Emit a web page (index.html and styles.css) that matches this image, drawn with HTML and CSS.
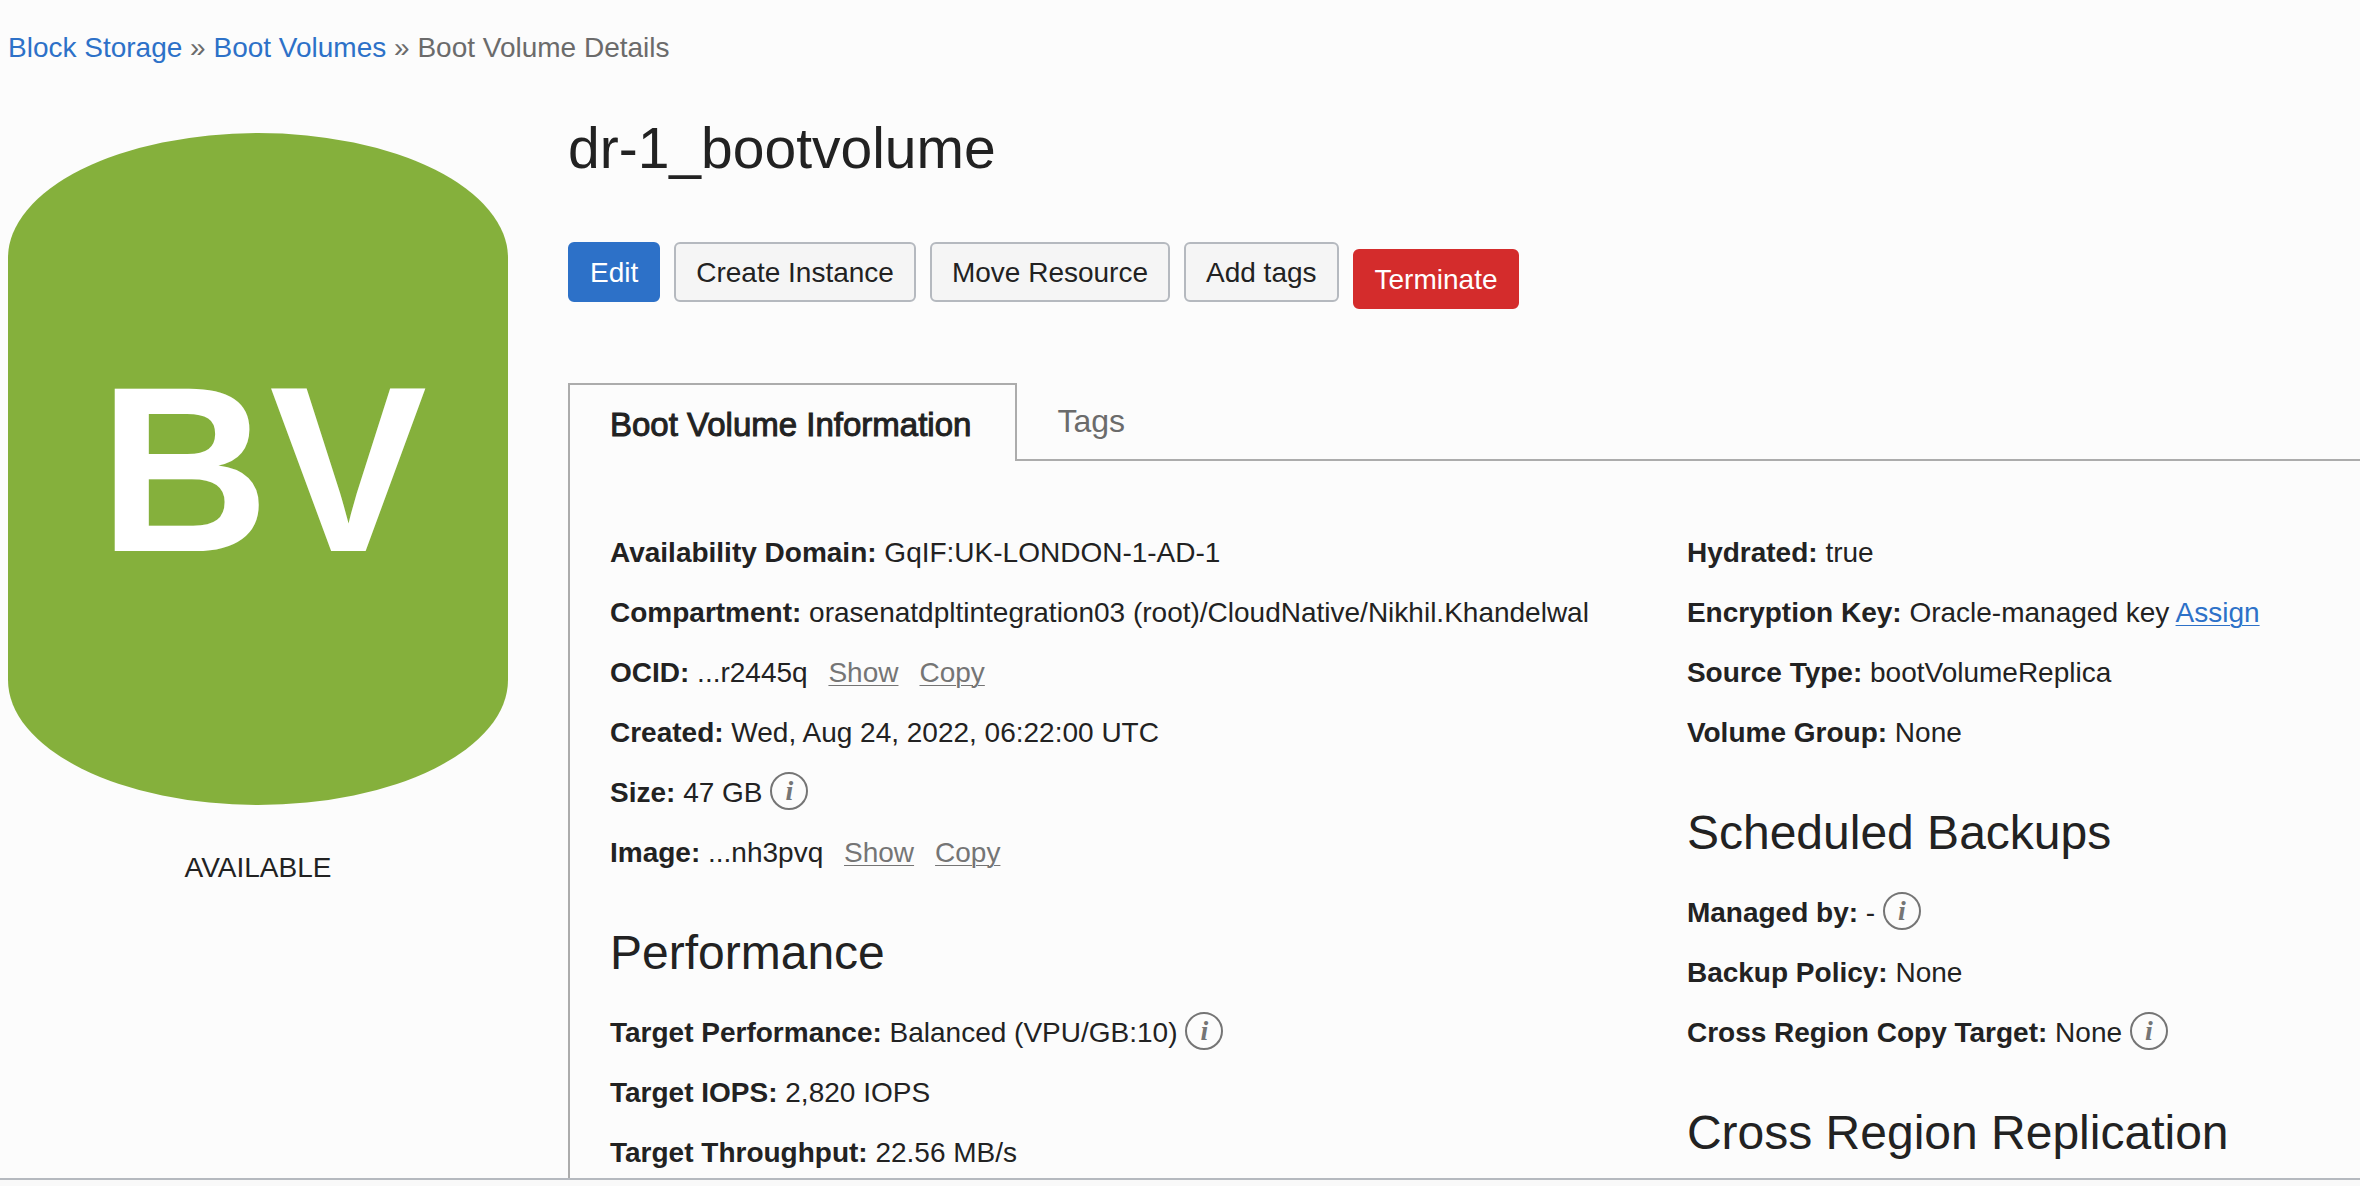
FILE: index.html
```html
<!DOCTYPE html>
<html lang="en">
<head>
  <meta charset="UTF-8">
  <meta name="viewport" content="width=device-width, initial-scale=1.0">
  <title>Boot Volume Details</title>
  <link rel="stylesheet" href="styles.css">
</head>
<body>

<nav class="breadcrumb" aria-label="Breadcrumb">
  <a href="#">Block Storage</a> <span class="separator">»</span>
  <a href="#">Boot Volumes</a> <span class="separator">»</span>
  <span>Boot Volume Details</span>
</nav>

<main class="page">
  <aside class="resource">
    <div class="resource-icon">BV</div>
    <p class="resource-status">AVAILABLE</p>
  </aside>

  <section class="details">
    <h1>dr-1_bootvolume</h1>

    <div class="actions">
      <button type="button" class="btn btn-primary">Edit</button>
      <button type="button" class="btn">Create Instance</button>
      <button type="button" class="btn">Move Resource</button>
      <button type="button" class="btn">Add tags</button>
      <button type="button" class="btn btn-danger">Terminate</button>
    </div>

    <div class="tabs" role="tablist">
      <button type="button" class="tab active" role="tab" aria-selected="true">Boot Volume Information</button>
      <button type="button" class="tab" role="tab" aria-selected="false">Tags</button>
    </div>

    <div class="panel" role="tabpanel">
      <div class="column">
        <p><strong>Availability Domain:</strong> GqIF:UK-LONDON-1-AD-1</p>
        <p><strong>Compartment:</strong> orasenatdpltintegration03 (root)/CloudNative/Nikhil.Khandelwal</p>
        <p><strong>OCID:</strong> ...r2445q <a href="#" class="inline-action">Show</a><a href="#" class="inline-action">Copy</a></p>
        <p><strong>Created:</strong> Wed, Aug 24, 2022, 06:22:00 UTC</p>
        <p><strong>Size:</strong> 47 GB <button type="button" class="info" aria-label="About size">i</button></p>
        <p><strong>Image:</strong> ...nh3pvq <a href="#" class="inline-action">Show</a><a href="#" class="inline-action">Copy</a></p>

        <h2>Performance</h2>
        <p><strong>Target Performance:</strong> Balanced (VPU/GB:10) <button type="button" class="info" aria-label="About target performance">i</button></p>
        <p><strong>Target IOPS:</strong> 2,820 IOPS</p>
        <p><strong>Target Throughput:</strong> 22.56 MB/s</p>
      </div>

      <div class="column">
        <p><strong>Hydrated:</strong> true</p>
        <p><strong>Encryption Key:</strong> Oracle-managed key <a href="#">Assign</a></p>
        <p><strong>Source Type:</strong> bootVolumeReplica</p>
        <p><strong>Volume Group:</strong> None</p>

        <h2>Scheduled Backups</h2>
        <p><strong>Managed by:</strong> - <button type="button" class="info" aria-label="About managed by">i</button></p>
        <p><strong>Backup Policy:</strong> None</p>
        <p><strong>Cross Region Copy Target:</strong> None <button type="button" class="info" aria-label="About cross region copy target">i</button></p>

        <h2>Cross Region Replication</h2>
      </div>
    </div>
  </section>
</main>

<footer class="footer"></footer>

</body>
</html>
```

FILE: styles.css
```css
* {
  box-sizing: border-box;
}

body {
  margin: 0;
  height: 100vh;
  display: flex;
  flex-direction: column;
  overflow: hidden;
  font-family: "Liberation Sans", Arial, sans-serif;
  font-size: 28px;
  line-height: 60px;
  color: #222;
  background-color: #fcfcfc;
}

h1, h2, p {
  margin: 0;
}

button {
  font-family: inherit;
  cursor: pointer;
}

a {
  color: #2d71c8;
}

/* Breadcrumb */
.breadcrumb {
  padding: 28px 8px 0;
  line-height: 40px;
  color: #6b6b6b;
}

.breadcrumb a {
  text-decoration: none;
}

/* Page layout */
.page {
  flex: 1;
  min-height: 0;
  display: flex;
  gap: 60px;
  padding-left: 8px;
  overflow: hidden;
}

.resource {
  flex: 0 0 500px;
  padding-top: 65px;
  text-align: center;
}

.resource-icon {
  height: 672px;
  padding-left: 10px;
  border-radius: 50% / 125px;
  background-color: #85b03c;
  color: #fff;
  font-size: 236px;
  font-weight: bold;
  line-height: 672px;
}

.resource-status {
  margin-top: 33px;
}

.details {
  flex: 1;
  min-width: 0;
}

h1 {
  padding-top: 48px;
  font-size: 57px;
  font-weight: normal;
  line-height: 64px;
}

/* Action buttons */
.actions {
  display: flex;
  gap: 14px;
  margin-top: 62px;
}

.btn {
  height: 60px;
  padding: 2px 20px 0;
  border: 2px solid #b5b9bf;
  border-radius: 6px;
  background-color: #f5f5f5;
  color: #222;
  font-size: 28px;
}

.btn-primary {
  border-color: #2d71c8;
  background-color: #2d71c8;
  color: #fff;
}

.btn-danger {
  margin-top: 7px;
  border-color: #d42c2c;
  background-color: #d42c2c;
  color: #fff;
}

/* Tabs */
.tabs {
  display: flex;
  margin-top: 74px;
}

.tabs::after {
  content: "";
  flex: 1;
  border-bottom: 2px solid #acacac;
}

.tab {
  height: 78px;
  padding: 0 40px;
  border: none;
  border-bottom: 2px solid #acacac;
  background: none;
  color: #6b6b6b;
  font-size: 32px;
}

.tab.active {
  padding: 4px 44px 0 40px;
  border: 2px solid #acacac;
  border-bottom: none;
  color: #222;
  font-size: 33px;
  -webkit-text-stroke: 1px #222;
}

/* Tab content */
.panel {
  display: grid;
  grid-template-columns: 8fr 5fr;
  padding: 62px 0 60px 40px;
  border-left: 2px solid #acacac;
  white-space: nowrap;
}

h2 {
  margin: 40px 0 20px;
  font-size: 48px;
  font-weight: normal;
  line-height: 60px;
}

.column p {
  height: 60px;
}

.column a {
  text-decoration-thickness: 1px;
  text-underline-offset: 3px;
}

.column .inline-action {
  margin-left: 13px;
  margin-right: 8px;
  color: #757575;
}

/* Round info buttons */
.info {
  width: 38px;
  height: 38px;
  padding: 0;
  border: 2px solid #757575;
  border-radius: 50%;
  background: none;
  color: #757575;
  font-family: "Liberation Serif", serif;
  font-size: 28px;
  font-style: italic;
  font-weight: bold;
  line-height: 32px;
  vertical-align: 2px;
}

.footer {
  height: 8px;
  border-top: 2px solid #b5b9bf;
  background-color: #f9f9f9;
}
```
